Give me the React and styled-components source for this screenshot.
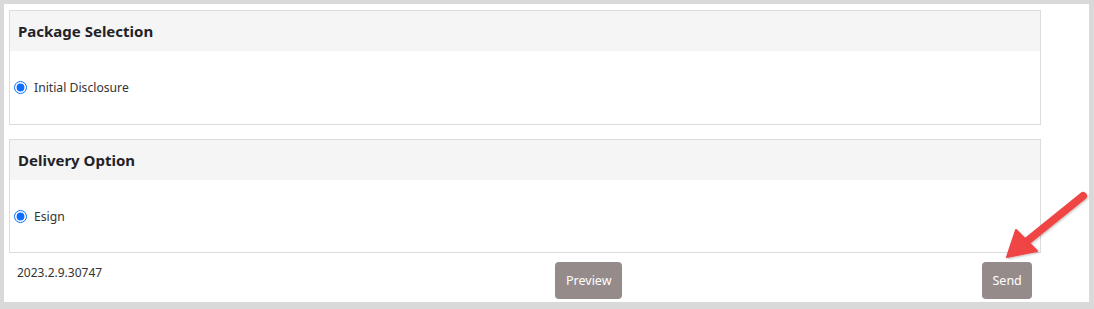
import React from "react"
import styled, { createGlobalStyle } from "styled-components"

const GlobalStyle = createGlobalStyle`
  html, body {
    margin: 0;
    padding: 0;
    background: #d9d9d9;
    font-family: "Noto Sans", "Open Sans", sans-serif;
  }
`

const Frame = styled.div`
  position: relative;
  box-sizing: border-box;
  width: 1085px;
  height: 298px;
  margin: 4px 0 0 4px;
  background: #ffffff;
  padding: 6px 48px 0 5px;
`

const Panel = styled.section`
  border: 1px solid #dcdcdc;
  background: #ffffff;
  margin-bottom: ${(p) => p.gap || 0}px;
`

const PanelHeader = styled.div`
  background: #f5f5f5;
  height: 40px;
  display: flex;
  align-items: center;
  padding-left: 8px;
  font-size: 15px;
  font-weight: 700;
  color: #1f2328;
`

const PanelBody = styled.div`
  height: ${(p) => p.h}px;
  display: flex;
  align-items: center;
  padding-left: 4px;
`

const RadioLabel = styled.label`
  display: flex;
  align-items: center;
  gap: 7px;
  font-size: 12.2px;
  color: #333;
`

const Radio = styled.input`
  margin: 0;
  width: 13px;
  height: 13px;
  accent-color: #0d6efd;
`

const Footer = styled.div`
  display: flex;
  align-items: flex-start;
  padding-top: 9px;
`

const Version = styled.div`
  width: 546px;
  padding: 2px 0 0 8px;
  box-sizing: border-box;
  font-size: 12px;
  color: #333;
`

const Button = styled.button`
  height: 37px;
  padding: 0 ${(p) => p.px}px;
  border: none;
  border-radius: 4px;
  background: #958b8b;
  color: #ffffff;
  font-family: inherit;
  font-size: 12.5px;
  margin-left: ${(p) => p.ml || 0}px;
`

const Arrow = styled.svg`
  position: absolute;
  left: 990px;
  top: 178px;
  overflow: visible;
`

export default function App() {
  return (
    <>
      <GlobalStyle />
      <Frame>
        <Panel gap={14}>
          <PanelHeader>Package Selection</PanelHeader>
          <PanelBody h={73}>
            <RadioLabel>
              <Radio type="radio" name="pkg" defaultChecked />
              Initial Disclosure
            </RadioLabel>
          </PanelBody>
        </Panel>
        <Panel>
          <PanelHeader>Delivery Option</PanelHeader>
          <PanelBody h={72}>
            <RadioLabel>
              <Radio type="radio" name="delivery" defaultChecked />
              Esign
            </RadioLabel>
          </PanelBody>
        </Panel>
        <Footer>
          <Version>2023.2.9.30747</Version>
          <Button px={11}>Preview</Button>
          <Button px={10} ml={360}>Send</Button>
        </Footer>
        <Arrow width="100" height="90">
          <defs>
            <filter id="sh" x="-20%" y="-20%" width="140%" height="140%">
              <feDropShadow dx="1" dy="1" stdDeviation="1" floodColor="#000" floodOpacity="0.25" />
            </filter>
          </defs>
          <g filter="url(#sh)" fill="#f04444" stroke="#f04444">
            <line x1="89" y1="14" x2="32" y2="60" strokeWidth="8" strokeLinecap="round" />
            <polygon points="13,75 22,48 43,69" strokeWidth="2" strokeLinejoin="round" />
          </g>
        </Arrow>
      </Frame>
    </>
  )
}
